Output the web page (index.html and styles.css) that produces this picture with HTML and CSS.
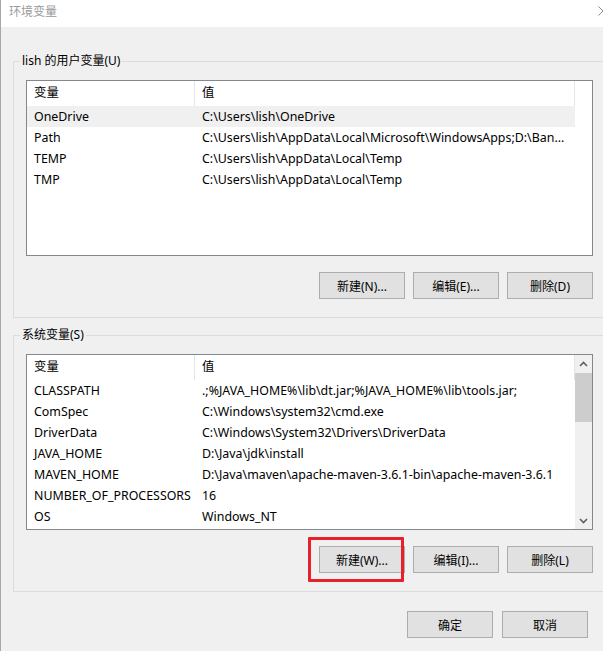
FILE: index.html
```html
<html>
  <head>
    <title>环境变量</title>
    <meta name="viewport" content="width=device-width, initial-scale=1">
    <link rel="stylesheet" href="styles.css">
  </head>
  <body>
    <div class="window">
      <div class="titlebar">
        <span class="title">环境变量</span>
        <svg class="close" width="10" height="10" viewBox="0 0 10 10">
          <path d="M0.5 0.5 L9.5 9.5 M9.5 0.5 L0.5 9.5" stroke="#8c8c8c" stroke-width="1" fill="none"/>
        </svg>
      </div>

      <div class="group first">
        <div class="legend">lish 的用户变量(U)</div>
        <div class="list">
          <div class="list-body">
            <div class="row head">
              <div class="cell name">变量</div>
              <div class="cell value">值</div>
            </div>
            <div class="row sel">
              <div class="cell name">OneDrive</div>
              <div class="cell value">C:\Users\lish\OneDrive</div>
            </div>
            <div class="row">
              <div class="cell name">Path</div>
              <div class="cell value">C:\Users\lish\AppData\Local\Microsoft\WindowsApps;D:\Ban...</div>
            </div>
            <div class="row">
              <div class="cell name">TEMP</div>
              <div class="cell value">C:\Users\lish\AppData\Local\Temp</div>
            </div>
            <div class="row">
              <div class="cell name">TMP</div>
              <div class="cell value">C:\Users\lish\AppData\Local\Temp</div>
            </div>
          </div>
          <div class="gutter"></div>
        </div>
        <div class="actions">
          <button class="btn">新建(N)...</button>
          <button class="btn">编辑(E)...</button>
          <button class="btn">删除(D)</button>
        </div>
      </div>

      <div class="group second">
        <div class="legend">系统变量(S)</div>
        <div class="list">
          <div class="list-body">
            <div class="row head">
              <div class="cell name">变量</div>
              <div class="cell value">值</div>
            </div>
            <div class="row">
              <div class="cell name">CLASSPATH</div>
              <div class="cell value">.;%JAVA_HOME%\lib\dt.jar;%JAVA_HOME%\lib\tools.jar;</div>
            </div>
            <div class="row">
              <div class="cell name">ComSpec</div>
              <div class="cell value">C:\Windows\system32\cmd.exe</div>
            </div>
            <div class="row">
              <div class="cell name">DriverData</div>
              <div class="cell value">C:\Windows\System32\Drivers\DriverData</div>
            </div>
            <div class="row">
              <div class="cell name">JAVA_HOME</div>
              <div class="cell value">D:\Java\jdk\install</div>
            </div>
            <div class="row">
              <div class="cell name">MAVEN_HOME</div>
              <div class="cell value">D:\Java\maven\apache-maven-3.6.1-bin\apache-maven-3.6.1</div>
            </div>
            <div class="row">
              <div class="cell name">NUMBER_OF_PROCESSORS</div>
              <div class="cell value">16</div>
            </div>
            <div class="row">
              <div class="cell name">OS</div>
              <div class="cell value">Windows_NT</div>
            </div>
          </div>
          <div class="scrollbar">
            <div class="arrow">
              <svg width="9" height="6" viewBox="0 0 9 6"><path d="M1 5 L4.5 1.5 L8 5" stroke="#606060" stroke-width="1.6" fill="none"/></svg>
            </div>
            <div class="track">
              <div class="thumb"></div>
            </div>
            <div class="arrow">
              <svg width="9" height="6" viewBox="0 0 9 6"><path d="M1 1 L4.5 4.5 L8 1" stroke="#606060" stroke-width="1.6" fill="none"/></svg>
            </div>
          </div>
        </div>
        <div class="actions">
          <div class="marked">
            <button class="btn">新建(W)...</button>
            <div class="mark"></div>
          </div>
          <button class="btn">编辑(I)...</button>
          <button class="btn">删除(L)</button>
        </div>
      </div>

      <div class="footer">
        <button class="btn">确定</button>
        <button class="btn">取消</button>
      </div>
    </div>
  </body>
</html>
```

FILE: styles.css
```css
* { box-sizing: border-box; }

body {
  margin: 0;
  background: #f0f0f0;
  font-family: "Noto Sans", "Noto Sans CJK SC", sans-serif;
  font-size: 12px;
  color: #000;
}

.window {
  width: 603px;
  height: 651px;
  overflow: hidden;
  background: #f0f0f0;
  border-left: 1px solid #a8a8a8;
}

/* title bar */
.titlebar {
  height: 27px;
  background: #fff;
  display: flex;
  align-items: flex-start;
  padding: 3px 0 0 8px;
  color: #9a9a9a;
  line-height: 18px;
}

.close {
  margin-left: auto;
  margin-right: -5px;
  margin-top: 3px;
  flex: none;
}

/* group boxes */
.group {
  width: 620px;
  margin-left: 12px;
  border: 1px solid #dcdcdc;
  padding: 0 0 18px 12px;
}

.group.first { margin-top: 34px; }
.group.second { margin-top: 17px; }

.legend {
  width: fit-content;
  height: 16px;
  line-height: 16px;
  margin: -9px 0 0 -6px;
  padding: 0 2px;
  background: #f0f0f0;
}

/* list views */
.list {
  margin-top: 11px;
  width: 567px;
  height: 176px;
  border: 1px solid #828790;
  background: #fff;
  display: flex;
}

.list-body {
  flex: 1;
  min-width: 0;
  overflow: hidden;
}

.gutter {
  width: 17px;
  flex: none;
}

.row {
  display: flex;
  height: 21px;
  line-height: 21px;
  font-size: 12.4px;
  white-space: nowrap;
}

.row.head {
  height: 25px;
  line-height: 24px;
}

.row.sel { background: #f0f0f0; }

.cell.name {
  width: 168px;
  flex: none;
  padding-left: 7px;
  overflow: hidden;
}

.cell.value {
  flex: 1;
  min-width: 0;
  padding-left: 7px;
  overflow: hidden;
}

.head .cell { border-right: 1px solid #e5e5e5; }

/* scrollbar */
.scrollbar {
  width: 17px;
  flex: none;
  background: #f0f0f0;
  display: flex;
  flex-direction: column;
}

.arrow {
  height: 17px;
  display: flex;
  align-items: center;
  justify-content: center;
}

.track {
  flex: 1;
  padding-top: 1px;
}

.thumb {
  height: 49px;
  background: #cdcdcd;
}

/* buttons */
.actions {
  width: 567px;
  margin-top: 16px;
  display: flex;
  justify-content: flex-end;
  gap: 8px;
}

.btn {
  width: 86px;
  height: 27px;
  padding: 0;
  background: #e1e1e1;
  border: 1px solid #adadad;
  font: inherit;
  color: #000;
}

.marked { position: relative; }

.marked .btn { display: block; }

/* red highlight drawn over the new button */
.mark {
  position: absolute;
  left: -11px;
  top: -9px;
  width: 96px;
  height: 45px;
  border: 3px solid #e6212b;
  border-radius: 1px;
}

.footer {
  display: flex;
  justify-content: flex-end;
  gap: 9px;
  padding: 19px 15px 0 0;
}
```
